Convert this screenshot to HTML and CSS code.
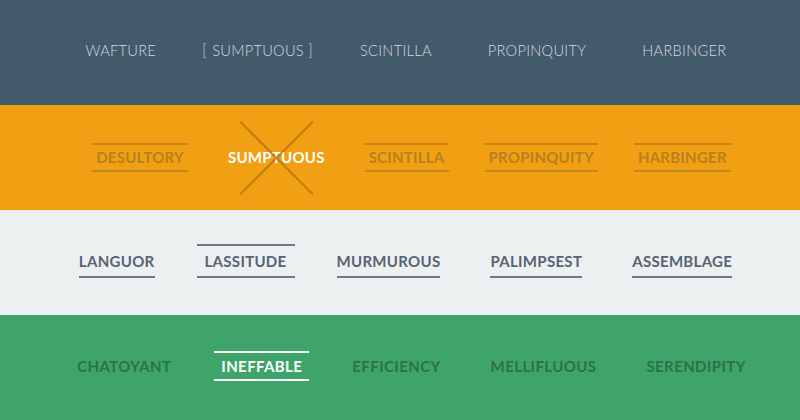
FILE: index.html
```html
<!DOCTYPE html>
<html lang="en">
<head>
<meta charset="utf-8">
<title>Creative Link Effects</title>
<link rel="stylesheet" href="styles.css">
</head>
<body>
<section class="band band-slate">
  <nav class="links links-bracket">
    <a href="#">WAFTURE</a>
    <a href="#" class="active">SUMPTUOUS</a>
    <a href="#">SCINTILLA</a>
    <a href="#">PROPINQUITY</a>
    <a href="#">HARBINGER</a>
  </nav>
</section>
<section class="band band-orange">
  <nav class="links links-cross">
    <a href="#">DESULTORY</a>
    <a href="#" class="active">SUMPTUOUS</a>
    <a href="#">SCINTILLA</a>
    <a href="#">PROPINQUITY</a>
    <a href="#">HARBINGER</a>
  </nav>
</section>
<section class="band band-cloud">
  <nav class="links links-under">
    <a href="#">LANGUOR</a>
    <a href="#" class="active">LASSITUDE</a>
    <a href="#">MURMUROUS</a>
    <a href="#">PALIMPSEST</a>
    <a href="#">ASSEMBLAGE</a>
  </nav>
</section>
<section class="band band-green">
  <nav class="links links-frame">
    <a href="#">CHATOYANT</a>
    <a href="#" class="active">INEFFABLE</a>
    <a href="#">EFFICIENCY</a>
    <a href="#">MELLIFLUOUS</a>
    <a href="#">SERENDIPITY</a>
  </nav>
</section>
</body>
</html>
```
FILE: styles.css
```css
* { box-sizing: border-box; }
html, body { margin: 0; padding: 0; }
body {
  width: 800px;
  font-family: Lato, "Open Sans", sans-serif;
  overflow: hidden;
}
.band {
  height: 105px;
  display: flex;
  align-items: center;
  justify-content: center;
}
.links {
  display: flex;
  align-items: center;
}
.links a {
  display: block;
  text-decoration: none;
  font-size: 15px;
  line-height: 20px;
  font-weight: 700;
  letter-spacing: 0.4px;
  white-space: nowrap;
  position: relative;
}

/* Row 1 - brackets */
.band-slate { background: #435a6b; padding: 0 0 3px 12px; }
.links-bracket { gap: 56px; }
.links-bracket a {
  color: #d2d9df;
  font-weight: 300;
  font-size: 14.6px;
  letter-spacing: 0.3px;
}
.links-bracket a.active::before,
.links-bracket a.active::after {
  position: absolute;
  top: 0;
}
.links-bracket a.active::before { content: "["; left: -10px; }
.links-bracket a.active::after { content: "]"; right: -9px; }

/* Row 2 - top/bottom lines and cross */
.band-orange { background: #f1a013; padding-left: 23px; }
.links-cross { gap: 36px; }
.links-cross a {
  color: #b5801f;
  padding: 2px 4px 3px;
  border-top: 2px solid #c2861b;
  border-bottom: 2px solid #c2861b;
  letter-spacing: 0.25px;
}
.links-cross a.active {
  color: #fff;
  border-color: transparent;
}
.links-cross a.active::before,
.links-cross a.active::after {
  content: "";
  position: absolute;
  left: 50%;
  top: 50%;
  width: 103px;
  height: 2px;
  margin: -1px 0 0 -51.5px;
  background: rgba(150, 95, 10, 0.55);
  transform: rotate(45deg);
}
.links-cross a.active::after { transform: rotate(-45deg); }

/* Row 3 - underline */
.band-cloud { background: #ecf0f1; padding: 0 0 3px 11px; }
.links-under { gap: 50px; }
.links-under a {
  color: #566473;
  padding: 5px 0;
  border-top: 2px solid transparent;
  border-bottom: 2px solid #6b7886;
  letter-spacing: 0.3px;
}
.links-under a.active {
  padding: 5px 8px;
  margin: 0 -8px;
  border-top-color: #6b7886;
}

/* Row 4 - framed active */
.band-green { background: #3fa46a; padding: 0 0 4px 23px; }
.links-frame { gap: 50px; }
.links-frame a {
  color: #2b7249;
  padding: 3px 0;
  border-top: 2px solid transparent;
  border-bottom: 2px solid transparent;
}
.links-frame a.active {
  color: #fff;
  padding: 3px 7px;
  margin: 0 -7px;
  border-color: #fff;
}
```
